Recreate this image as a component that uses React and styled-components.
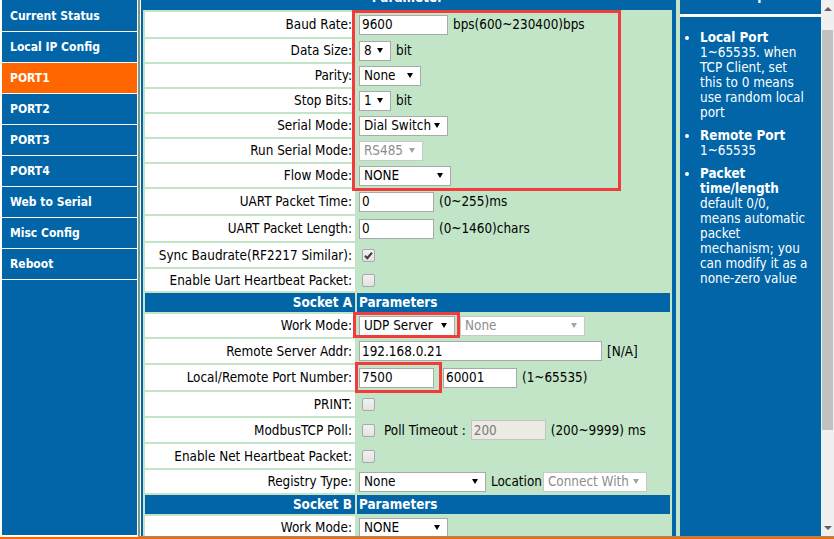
import React from "react";
import styled, { createGlobalStyle } from "styled-components";

const BLUE = "#0165a8";
const GREEN = "#c2e5c7";
const FONT = `"DejaVu Sans Condensed", "Liberation Sans", sans-serif`;

const GlobalStyle = createGlobalStyle`
  html, body {
    margin: 0;
    padding: 0;
    background: #fff;
    overflow: hidden;
  }
  body {
    font-family: ${FONT};
    font-size: 13.4px;
    color: #000;
  }
`;

const menu = [
  "Current Status",
  "Local IP Config",
  "PORT1",
  "PORT2",
  "PORT3",
  "PORT4",
  "Web to Serial",
  "Misc Config",
  "Reboot",
];

export default function App() {
  return (
    <Screen>
      <GlobalStyle />
      <Frames>
        <Sidebar>
          {menu.map((m) => (
            <MenuItem key={m} $active={m === "PORT1"}>
              {m}
            </MenuItem>
          ))}
        </Sidebar>

        <RightFrame>
          <MainPanel>
            <TitleBar>
              <span>Parameter</span>
            </TitleBar>
            <FormTable>
              <tbody>
                <Field label="Baud Rate:" h={25}>
                  <TextInput $w={89} defaultValue="9600" readOnly />
                  <span>bps(600~230400)bps</span>
                </Field>
                <Field label="Data Size:" h={23}>
                  <Select value="8" w={32} />
                  <span>bit</span>
                </Field>
                <Field label="Parity:" h={23}>
                  <Select value="None" w={62} />
                </Field>
                <Field label="Stop Bits:" h={23}>
                  <Select value="1" w={32} />
                  <span>bit</span>
                </Field>
                <Field label="Serial Mode:" h={23}>
                  <Select value="Dial Switch" w={89} />
                </Field>
                <Field label="Run Serial Mode:" h={23}>
                  <Select value="RS485" w={64} disabled />
                </Field>
                <Field label="Flow Mode:" h={23}>
                  <Select value="NONE" w={92} />
                </Field>
                <Field label="UART Packet Time:" h={25}>
                  <TextInput $w={75} defaultValue="0" readOnly />
                  <span>(0~255)ms</span>
                </Field>
                <Field label="UART Packet Length:" h={25}>
                  <TextInput $w={75} defaultValue="0" readOnly />
                  <span>(0~1460)chars</span>
                </Field>
                <Field label="Sync Baudrate(RF2217 Similar):" h={24}>
                  <Checkbox checked />
                </Field>
                <Field label="Enable Uart Heartbeat Packet:" h={22}>
                  <Checkbox />
                </Field>

                <HeadRow title="Socket A" />

                <Field label="Work Mode:" h={23}>
                  <Select value="UDP Server" w={96} />
                  <Select value="None" w={125} disabled />
                </Field>
                <Field label="Remote Server Addr:" h={24}>
                  <TextInput $w={243} defaultValue="192.168.0.21" readOnly />
                  <span>[N/A]</span>
                </Field>
                <Field label="Local/Remote Port Number:" h={25}>
                  <TextInput $w={75} defaultValue="7500" readOnly />
                  <TextInput $w={74} $gap={4} defaultValue="60001" readOnly />
                  <span>(1~65535)</span>
                </Field>
                <Field label="PRINT:" h={24}>
                  <Checkbox />
                </Field>
                <Field label="ModbusTCP Poll:" h={24}>
                  <Checkbox />
                  <Note $gap={4}>Poll Timeout :</Note>
                  <TextInput $w={75} defaultValue="200" readOnly disabled />
                  <span>(200~9999) ms</span>
                </Field>
                <Field label="Enable Net Heartbeat Packet:" h={24}>
                  <Checkbox />
                </Field>
                <Field label="Registry Type:" h={23}>
                  <Select value="None" w={127} />
                  <span>Location</span>
                  <Select value="Connect With" w={104} disabled tight />
                </Field>

                <HeadRow title="Socket B" />

                <Field label="Work Mode:" h={23}>
                  <Select value="NONE" w={89} />
                </Field>
              </tbody>
            </FormTable>
          </MainPanel>

          <HelpPanel>
            <TitleBar $short>
              <span>Help</span>
            </TitleBar>
            <HelpList>
              <li>
                <strong>Local Port</strong>
                1~65535. when
                <br />
                TCP Client, set
                <br />
                this to 0 means
                <br />
                use random local
                <br />
                port
              </li>
              <li>
                <strong>Remote Port</strong>
                1~65535
              </li>
              <li>
                <strong>
                  Packet
                  <br />
                  time/length
                </strong>
                default 0/0,
                <br />
                means automatic
                <br />
                packet
                <br />
                mechanism; you
                <br />
                can modify it as a
                <br />
                none-zero value
              </li>
            </HelpList>
          </HelpPanel>

          <Scrollbar>
            <ScrollButton>
              <Tri $up />
            </ScrollButton>
            <Track>
              <Thumb />
            </Track>
            <ScrollButton>
              <Tri />
            </ScrollButton>
          </Scrollbar>
        </RightFrame>
      </Frames>
      <BottomBar />

      {/* red annotation boxes drawn over the form */}
      <Highlight style={{ left: 352, top: 10, width: 269, height: 181 }} />
      <Highlight style={{ left: 353, top: 312, width: 107, height: 26 }} />
      <Highlight style={{ left: 355, top: 362, width: 87, height: 31 }} />
    </Screen>
  );
}

function Field({ label, h, children }) {
  return (
    <Row $h={h}>
      <LabelCell>{label}</LabelCell>
      <ValueCell>
        <Inline>{children}</Inline>
      </ValueCell>
    </Row>
  );
}

function HeadRow({ title }) {
  return (
    <Row $h={19}>
      <HeadCell $right>{title}</HeadCell>
      <HeadCell>Parameters</HeadCell>
    </Row>
  );
}

function Select({ value, w, disabled, tight }) {
  return (
    <SelectBox $w={w} $disabled={disabled} $tight={tight}>
      <span>{value}</span>
      <Arrow $disabled={disabled} />
    </SelectBox>
  );
}

function Checkbox({ checked }) {
  return (
    <CheckBox>
      {checked && (
        <svg width="11" height="11" viewBox="0 0 11 11">
          <path
            d="M2 5.8 L4.3 8.2 L9 2.6"
            fill="none"
            stroke="#404040"
            strokeWidth="2.2"
          />
        </svg>
      )}
    </CheckBox>
  );
}

const Screen = styled.div`
  position: relative;
  width: 834px;
  height: 539px;
  display: flex;
  flex-direction: column;
  overflow: hidden;
`;

const Frames = styled.div`
  display: flex;
  height: 537px;
`;

const Sidebar = styled.nav`
  width: 135px;
  height: 535px;
  margin: 0 1px 0 2px;
  padding-top: 1px;
  box-sizing: border-box;
  background: ${BLUE};
  flex-shrink: 0;
`;

const MenuItem = styled.div`
  height: 30px;
  display: flex;
  align-items: center;
  padding-left: 8px;
  border-bottom: 1px solid #fff;
  background: ${(p) => (p.$active ? "#ff6600" : BLUE)};
  color: #fff;
  font-size: 12px;
  font-weight: bold;
`;

const RightFrame = styled.div`
  flex: 1;
  display: flex;
  height: 537px;
  box-sizing: border-box;
  border-left: 2px solid #7c978a;
  border-bottom: 1px solid #7c978a;
  padding-left: 1px;
  background: #fff;
`;

const MainPanel = styled.section`
  width: 535px;
  flex-shrink: 0;
  box-sizing: border-box;
  border-left: 2px solid ${BLUE};
  border-right: 4px solid ${BLUE};
  background: ${GREEN};
  overflow: hidden;
`;

const TitleBar = styled.div`
  height: ${(p) => (p.$short ? 14 : 10)}px;
  background: ${BLUE};
  color: #fff;
  font-weight: bold;
  text-align: center;
  line-height: 16px;
  overflow: hidden;
  border-bottom: ${(p) => (p.$short ? "3px solid #fff" : "none")};

  span {
    display: block;
    margin-top: ${(p) => (p.$short ? -12 : -10)}px;
  }
`;

const FormTable = styled.table`
  width: 529px;
  border-collapse: separate;
  border-spacing: 2px;
  table-layout: fixed;
`;

const Row = styled.tr`
  td {
    height: ${(p) => p.$h}px;
    padding-top: 0;
    padding-bottom: 0;
    vertical-align: middle;
  }
`;

const LabelCell = styled.td`
  width: 205px;
  padding: 0 3px 0 2px;
  background: #fff;
  text-align: right;
  white-space: nowrap;
`;

const ValueCell = styled.td`
  padding: 0 2px;
  white-space: nowrap;
`;

const HeadCell = styled.td`
  background: ${BLUE};
  color: #fff;
  font-weight: bold;
  text-align: ${(p) => (p.$right ? "right" : "left")};
  padding: 0 ${(p) => (p.$right ? "3px 0 2px" : "2px")};
`;

const Inline = styled.div`
  display: flex;
  align-items: center;
  gap: 5px;
`;

const Note = styled.span`
  margin-left: ${(p) => p.$gap || 0}px;
`;

const TextInput = styled.input`
  box-sizing: border-box;
  width: ${(p) => p.$w}px;
  height: 20px;
  margin: 0 0 0 ${(p) => p.$gap || 0}px;
  padding: 0 2px;
  border: 1px solid ${(p) => (p.disabled ? "#c4c4c4" : "#a9a9a9")};
  background: ${(p) => (p.disabled ? "#ebebe4" : "#fff")};
  color: ${(p) => (p.disabled ? "#7a7a7a" : "#000")};
  font-family: ${FONT};
  font-size: 13.4px;
  outline: none;
`;

const SelectBox = styled.div`
  box-sizing: border-box;
  width: ${(p) => p.$w}px;
  height: 20px;
  margin-left: ${(p) => (p.$tight ? -4 : 0)}px;
  display: flex;
  align-items: center;
  justify-content: space-between;
  padding: 0 7px 0 4px;
  border: 1px solid ${(p) => (p.$disabled ? "#c9c9c9" : "#a9a9a9")};
  background: #fff;
  color: ${(p) => (p.$disabled ? "#8d8d8d" : "#000")};
`;

const Arrow = styled.span`
  width: 0;
  height: 0;
  border-left: 3px solid transparent;
  border-right: 3px solid transparent;
  border-top: 5px solid ${(p) => (p.$disabled ? "#a3a3a3" : "#000")};
`;

const CheckBox = styled.span`
  box-sizing: border-box;
  width: 13px;
  height: 13px;
  margin-left: 3px;
  display: flex;
  align-items: center;
  justify-content: center;
  border: 1px solid #a8a8a8;
  border-radius: 2px;
  background: linear-gradient(#f2f2f2, #e2e2e2);
`;

const HelpPanel = styled.aside`
  width: 145px;
  flex-shrink: 0;
  box-sizing: border-box;
  border-left: 4px solid ${GREEN};
  background: ${BLUE};
  color: #fff;
  overflow: hidden;
`;

const HelpList = styled.ul`
  margin: 13px 0 0;
  padding: 0 6px 0 20px;
  line-height: 15px;
  white-space: nowrap;

  li {
    margin-bottom: 8px;
  }
  strong {
    display: block;
  }
`;

const Scrollbar = styled.div`
  width: 13px;
  flex-shrink: 0;
  display: flex;
  flex-direction: column;
  background: #f0f0f0;
`;

const ScrollButton = styled.div`
  height: 17px;
  display: flex;
  align-items: center;
  justify-content: center;
`;

const Tri = styled.span`
  width: 0;
  height: 0;
  border-left: 4px solid transparent;
  border-right: 4px solid transparent;
  ${(p) =>
    p.$up ? "border-bottom: 4px solid #606060;" : "border-top: 4px solid #606060;"}
`;

const Track = styled.div`
  flex: 1;
  padding: 13px 1px 0;
`;

const Thumb = styled.div`
  height: 400px;
  background: #c1c1c1;
`;

const BottomBar = styled.div`
  height: 2px;
  background: #ff6600;
`;

const Highlight = styled.div`
  position: absolute;
  box-sizing: border-box;
  border: 3px solid #f03c3c;
  pointer-events: none;
`;
